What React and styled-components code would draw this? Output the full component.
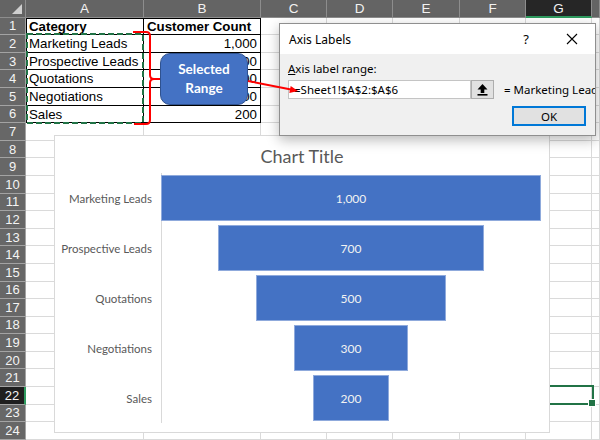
import React from 'react';
import styled, { createGlobalStyle } from 'styled-components';

const Global = createGlobalStyle`
  html, body { margin: 0; padding: 0; background: #fff; }
  body { font-family: "Liberation Sans", Arial, sans-serif; }
  * { box-sizing: border-box; }
`;

const COLS = ['A', 'B', 'C', 'D', 'E', 'F', 'G', ''];
const ROWS = 24;
const ACTIVE_COL = 'G';
const ACTIVE_ROW = 22;

const TABLE = [
  ['Category', 'Customer Count'],
  ['Marketing Leads', '1,000'],
  ['Prospective Leads', '700'],
  ['Quotations', '500'],
  ['Negotiations', '300'],
  ['Sales', '200'],
];

const FUNNEL = [
  { label: 'Marketing Leads', value: 1000, text: '1,000' },
  { label: 'Prospective Leads', value: 700, text: '700' },
  { label: 'Quotations', value: 500, text: '500' },
  { label: 'Negotiations', value: 300, text: '300' },
  { label: 'Sales', value: 200, text: '200' },
];

const Screen = styled.div`
  position: relative;
  width: 600px;
  height: 440px;
  overflow: hidden;
  background: #fff;
`;

const Sheet = styled.div`
  display: grid;
  grid-template-columns: 26px 118px 117px 66px 66px 67px 66px 66px 8px;
  grid-auto-rows: 17.6px;
  width: 600px;
`;

const Corner = styled.div`
  position: relative;
  background: #646464;
  border-right: 1px solid #8d8d8d;
  border-bottom: 1px solid #8d8d8d;
  &::after {
    content: '';
    position: absolute;
    right: 3px;
    bottom: 3px;
    width: 0;
    height: 0;
    border-left: 10px solid transparent;
    border-bottom: 10px solid #cfcfcf;
  }
`;

const ColHead = styled.div`
  background: ${(p) => (p.$active ? '#262626' : '#646464')};
  color: #f2f2f2;
  border-right: 1px solid #8d8d8d;
  border-bottom: ${(p) => (p.$active ? '2px solid #2e9b5f' : '1px solid #8d8d8d')};
  font-size: 13.5px;
  display: flex;
  align-items: center;
  justify-content: center;
  padding-top: ${(p) => (p.$active ? '1px' : '0')};
`;

const RowHead = styled.div`
  background: ${(p) => (p.$active ? '#1f1f1f' : '#676767')};
  color: #f4f4f4;
  border-bottom: 1px solid #a3a3a3;
  border-right: ${(p) => (p.$active ? '2px solid #2e9b5f' : '1px solid #a3a3a3')};
  font-size: 13px;
  display: flex;
  align-items: center;
  justify-content: center;
`;

const Cell = styled.div`
  border-right: 1px solid ${(p) => (p.$boxed ? '#000' : '#dadada')};
  border-bottom: 1px solid ${(p) => (p.$boxed ? '#000' : '#dadada')};
  box-shadow: ${(p) => p.$edge || 'none'};
  font-size: 13.3px;
  font-weight: ${(p) => (p.$bold ? 700 : 400)};
  color: #000;
  text-align: ${(p) => (p.$num ? 'right' : 'left')};
  padding: 0 3px;
  line-height: 18px;
  white-space: nowrap;
  overflow: hidden;
`;

const Marquee = styled.svg`
  position: absolute;
  left: 26px;
  top: 33px;
  width: 118px;
  height: 91px;
  overflow: visible;
`;

const Overlay = styled.svg`
  position: absolute;
  left: 0;
  top: 0;
  width: 600px;
  height: 440px;
  pointer-events: none;
`;

const Callout = styled.div`
  position: absolute;
  left: 160px;
  top: 53px;
  width: 88px;
  height: 52px;
  border-radius: 10px;
  background: #4472c4;
  border: 1.5px solid #2f528f;
  color: #fff;
  font-family: Lato, "Open Sans", sans-serif;
  font-weight: 700;
  font-size: 13.5px;
  line-height: 19px;
  display: flex;
  flex-direction: column;
  align-items: center;
  justify-content: center;
`;

const Selection = styled.div`
  position: absolute;
  left: 525px;
  top: 385px;
  width: 69px;
  height: 20px;
  border: 2px solid #217346;
  &::after {
    content: '';
    position: absolute;
    right: -4px;
    bottom: -4px;
    width: 6px;
    height: 6px;
    background: #217346;
    border: 1px solid #fff;
  }
`;

/* ---------- Chart ---------- */
const Chart = styled.div`
  position: absolute;
  left: 54px;
  top: 135px;
  width: 496px;
  height: 298px;
  background: #fff;
  border: 1px solid #d9d9d9;
  display: flex;
  flex-direction: column;
  font-family: Lato, "Open Sans", sans-serif;
`;

const ChartTitle = styled.div`
  height: 37px;
  display: flex;
  align-items: center;
  justify-content: center;
  font-size: 18px;
  color: #595959;
  padding-top: 2px;
`;

const Plot = styled.div`
  display: grid;
  grid-template-columns: 106px 380px;
  grid-auto-rows: 50px;
`;

const AxisLabel = styled.div`
  display: flex;
  align-items: center;
  justify-content: flex-end;
  padding-right: 9px;
  font-size: 11.5px;
  color: #595959;
  white-space: nowrap;
`;

const Track = styled.div`
  display: flex;
  align-items: center;
  justify-content: center;
  box-shadow: inset 1px 0 0 #d9d9d9;
`;

const Bar = styled.div`
  height: 46px;
  background: #4472c4;
  border: 1px solid #8faadc;
  display: flex;
  align-items: center;
  justify-content: center;
  color: #f2f2f2;
  font-size: 12px;
`;

/* ---------- Dialog ---------- */
const Dialog = styled.div`
  position: absolute;
  left: 279px;
  top: 23px;
  width: 317px;
  height: 113px;
  border: 1px solid #8f8f8f;
  background: #f0f0f0;
  box-shadow: 0 4px 12px rgba(0, 0, 0, 0.28);
  display: flex;
  flex-direction: column;
  overflow: hidden;
  font-family: "Noto Sans", "Open Sans", sans-serif;
  font-size: 11.5px;
  color: #000;
`;

const TitleBar = styled.div`
  height: 30px;
  background: #fff;
  display: flex;
  align-items: center;
  padding-left: 9px;
`;

const DialogTitle = styled.div`
  flex: 1;
  font-size: 12px;
`;

const TitleButton = styled.div`
  width: 46px;
  height: 30px;
  display: flex;
  align-items: center;
  justify-content: center;
  font-size: 13px;
`;

const DialogBody = styled.div`
  flex: 1;
  display: flex;
  flex-direction: column;
  padding: 7px 9px 8px 8px;
`;

const FieldLabel = styled.div`
  height: 16px;
  line-height: 16px;
  margin-bottom: 3px;
  span { text-decoration: underline; }
`;

const FieldRow = styled.div`
  display: flex;
  align-items: center;
  height: 19px;
  white-space: nowrap;
`;

const RangeInput = styled.div`
  flex: 0 0 183px;
  height: 19px;
  background: #fff;
  border: 1px solid #c4c4c4;
  padding-left: 5px;
  line-height: 17px;
`;

const CollapseBtn = styled.div`
  flex: 0 0 23px;
  height: 19px;
  background: #e1e1e1;
  border: 1px solid #adadad;
  display: flex;
  align-items: center;
  justify-content: center;
`;

const Preview = styled.div`
  flex: 0 0 auto;
  margin-left: 10px;
  white-space: nowrap;
`;

const OkButton = styled.div`
  align-self: flex-end;
  margin-top: 7px;
  width: 74px;
  height: 20px;
  background: #e1e1e1;
  border: 2px solid #0078d7;
  display: flex;
  align-items: center;
  justify-content: center;
  font-size: 11.5px;
`;

function Grid() {
  const items = [<Corner key="corner" />];
  COLS.forEach((c, i) => items.push(<ColHead key={'h' + i} $active={c === ACTIVE_COL}>{c}</ColHead>));
  for (let r = 1; r <= ROWS; r++) {
    items.push(<RowHead key={'r' + r} $active={r === ACTIVE_ROW}>{r}</RowHead>);
    COLS.forEach((c, ci) => {
      const boxed = r <= TABLE.length && ci < 2;
      const data = boxed ? TABLE[r - 1][ci] : null;
      const edges = [];
      if (boxed && r === 1) edges.push('inset 0 1px 0 #000');
      if (boxed && ci === 0) edges.push('inset 1px 0 0 #000');
      items.push(
        <Cell
          key={'c' + ci + '-' + r}
          $boxed={boxed}
          $edge={edges.join(', ')}
          $bold={r === 1 && boxed}
          $num={boxed && ci === 1 && r > 1}
        >
          {data}
        </Cell>
      );
    });
  }
  return <Sheet>{items}</Sheet>;
}

function FunnelChart() {
  return (
    <Chart>
      <ChartTitle>Chart Title</ChartTitle>
      <Plot>
        {FUNNEL.map((d) => (
          <React.Fragment key={d.label}>
            <AxisLabel>{d.label}</AxisLabel>
            <Track>
              <Bar style={{ width: `${(d.value / 1000) * 380}px` }}>{d.text}</Bar>
            </Track>
          </React.Fragment>
        ))}
      </Plot>
    </Chart>
  );
}

function AxisDialog() {
  return (
    <Dialog>
      <TitleBar>
        <DialogTitle>Axis Labels</DialogTitle>
        <TitleButton>?</TitleButton>
        <TitleButton>
          <svg width="12" height="12" viewBox="0 0 12 12">
            <path d="M1 1 L11 11 M11 1 L1 11" stroke="#000" strokeWidth="1.1" fill="none" />
          </svg>
        </TitleButton>
      </TitleBar>
      <DialogBody>
        <FieldLabel><span>A</span>xis label range:</FieldLabel>
        <FieldRow>
          <RangeInput>=Sheet1!$A$2:$A$6</RangeInput>
          <CollapseBtn>
            <svg width="13" height="13" viewBox="0 0 13 13">
              <path d="M6.5 1 L11.5 6.5 H8.3 V10 H4.7 V6.5 H1.5 Z" fill="#000" />
              <rect x="1.5" y="11" width="10" height="1.6" fill="#000" />
            </svg>
          </CollapseBtn>
          <Preview>= Marketing Leads</Preview>
        </FieldRow>
        <OkButton>OK</OkButton>
      </DialogBody>
    </Dialog>
  );
}

export default function App() {
  return (
    <>
      <Global />
      <Screen>
        <Grid />
        <Selection />
        <FunnelChart />
        <Marquee viewBox="0 0 118 91">
          <rect x="1" y="1" width="116" height="89" fill="none" stroke="#217346" strokeWidth="2" strokeDasharray="6 3" />
        </Marquee>
        <Overlay viewBox="0 0 600 440">
          <path
            d="M133 32 H146 Q150 32 150 36 V75 Q150 79 154 79 H161 M154 79 Q150 79 150 83 V120 Q150 124 146 124 H134"
            fill="none"
            stroke="#ff0000"
            strokeWidth="2"
          />
        </Overlay>
        <Callout>
          <div>Selected</div>
          <div>Range</div>
        </Callout>
        <AxisDialog />
        <Overlay viewBox="0 0 600 440">
          <line x1="248" y1="81" x2="291" y2="89.6" stroke="#ff0000" strokeWidth="2" />
          <polygon points="298,91 289.3,93 290.7,86" fill="#ff0000" />
        </Overlay>
      </Screen>
    </>
  );
}
